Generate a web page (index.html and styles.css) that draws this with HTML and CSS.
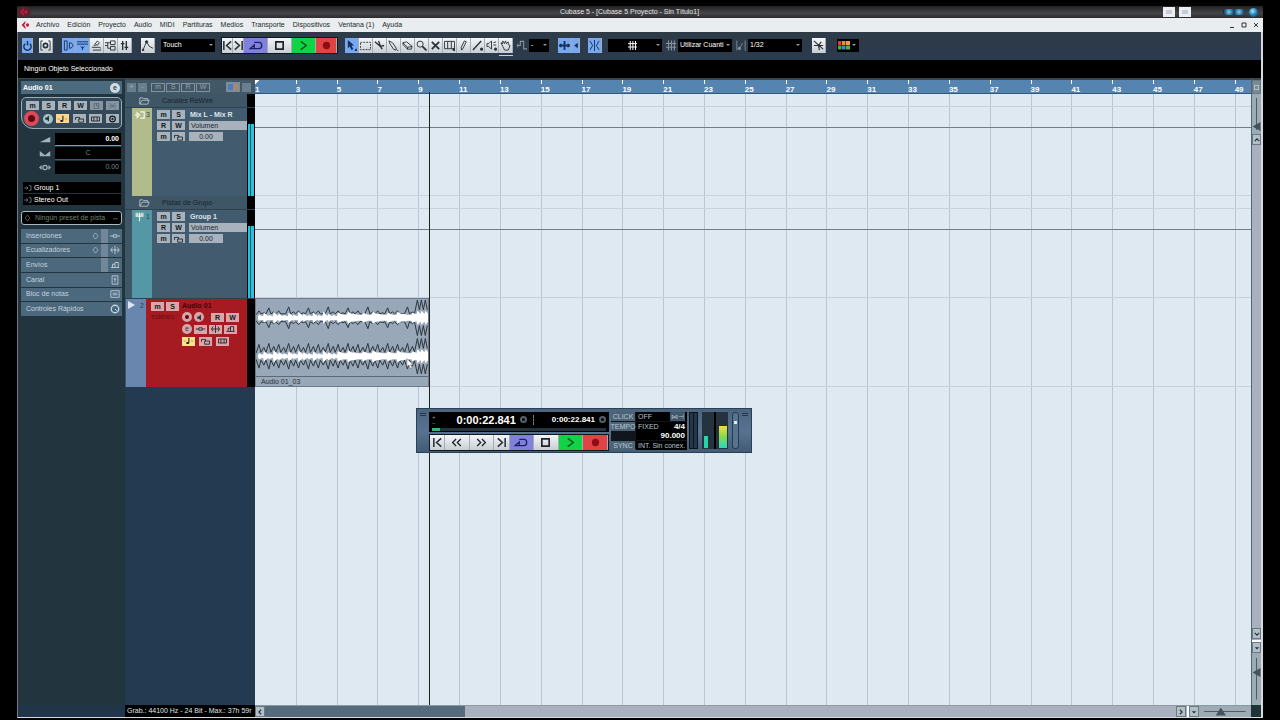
FILE: index.html
```html
<!DOCTYPE html>
<html lang="es">
<head>
  <meta charset="utf-8">
  <title>Cubase 5 - [Cubase 5 Proyecto - Sin Título1]</title>
  <link rel="stylesheet" href="styles.css">
</head>
<body>
  <!-- shared icons -->
  <svg class="defs" aria-hidden="true">
    <symbol id="i-logo" viewBox="0 0 12 12"><path d="M6 0 0 6l6 6V9L4 6l2-3z" fill="#c21b3c" stroke="none"/><circle cx="9" cy="6" r="2.500" fill="#c21b3c" stroke="none"/></symbol>
    <symbol id="i-power" viewBox="0 0 12 12"><path d="M3.500 4a4 4 0 1 0 5 0M6 1v5" stroke-width="1.500"/></symbol>
    <symbol id="i-camera" viewBox="0 0 12 12"><path d="M3 1H1v10h2M9 1h2v10H9"/><circle cx="6" cy="6" r="2.300" stroke-width="1.800"/></symbol>
    <symbol id="i-insp" viewBox="0 0 12 12"><path d="M1.500 1h3v10h-3zM7 3v6c5 0 5-6 0-6"/></symbol>
    <symbol id="i-info" viewBox="0 0 12 12"><path d="M0 2h12M0 4.500h12M4 7l2 2 2-2M6 7v4"/></symbol>
    <symbol id="i-over" viewBox="0 0 12 12"><path d="M2 11h9M1 8h8l2 1M3 6l4-1M4 5l3-4 2 2-2 3"/></symbol>
    <symbol id="i-pool" viewBox="0 0 12 12"><path d="M6 1h5v4H6zM6 7h5v4H6zM0 3h6M3 3v6h3M0 6h3"/></symbol>
    <symbol id="i-mixer" viewBox="0 0 12 12"><path d="M4 1v10M8 1v10M2 4h4M6 8h4" stroke-width="1.500"/></symbol>
    <symbol id="i-auto" viewBox="0 0 12 12"><path d="M1 11 5 2l3 5 4 2"/><circle cx="5" cy="2" r="1.300" fill="currentColor"/><circle cx="1" cy="11" r="1" fill="currentColor"/></symbol>
    <symbol id="i-start" viewBox="0 0 12 12"><path d="M2 1v10M10 1.500 5 6l5 4.500" stroke-width="1.700"/></symbol>
    <symbol id="i-end" viewBox="0 0 12 12"><path d="M10 1v10M2 1.500 7 6l-5 4.500" stroke-width="1.700"/></symbol>
    <symbol id="i-rew" viewBox="0 0 14 12"><path d="M6.500 1.500 2 6l4.500 4.500M12.500 1.500 8 6l4.500 4.500" stroke-width="1.600"/></symbol>
    <symbol id="i-fwd" viewBox="0 0 14 12"><path d="M1.500 1.500 6 6l-4.500 4.500M7.500 1.500 12 6l-4.500 4.500" stroke-width="1.600"/></symbol>
    <symbol id="i-loop" viewBox="0 0 16 12"><path d="M6 2.500h5.500c4 0 4 7 0 7H1.500L6 5.500v4" stroke-width="1.500"/></symbol>
    <symbol id="i-stop" viewBox="0 0 12 12"><path d="M2 2h8v8H2z" stroke-width="1.800"/></symbol>
    <symbol id="i-play" viewBox="0 0 12 12"><path d="M3 1.500 9 6l-6 4.500" stroke-width="1.700"/></symbol>
    <symbol id="i-rec" viewBox="0 0 12 12"><circle cx="6" cy="6" r="4" fill="#8e0d12" stroke="none"/></symbol>
    <symbol id="i-arrow" viewBox="0 0 12 12"><path d="M2 0v9l2-2 2 4 2-1-2-4h3z" fill="currentColor" stroke="none"/><circle cx="11" cy="11" r="1" fill="currentColor"/></symbol>
    <symbol id="i-range" viewBox="0 0 12 12"><path d="M.5 2.500h11v8H.5z" stroke-dasharray="2 1.200"/></symbol>
    <symbol id="i-split" viewBox="0 0 12 12"><path d="m1 2 6 5M5 1l2 6M7 7l4-1M7 7l2 3" stroke-width="1.500"/></symbol>
    <symbol id="i-glue" viewBox="0 0 12 12"><path d="m1 1 4 2 4 6-1 2-2-1-4-6zM9 10l2 2"/></symbol>
    <symbol id="i-erase" viewBox="0 0 12 12"><path d="m1 3 4-1 6 5-1 3H6L1 5zM1 3l5 5 5-1M6 8v2"/></symbol>
    <symbol id="i-zoom" viewBox="0 0 12 12"><circle cx="4.500" cy="4.500" r="3.300"/><path d="m7 7 4.500 4.500" stroke-width="1.800"/></symbol>
    <symbol id="i-mute" viewBox="0 0 12 12"><path d="m2 2 8 8M10 2l-8 8" stroke-width="1.900"/></symbol>
    <symbol id="i-warp" viewBox="0 0 12 12"><path d="M.5 1.500h11v8H.5zM4 1.500v8M8 1.500v8"/><circle cx="11" cy="10.500" r="1.300" fill="currentColor"/></symbol>
    <symbol id="i-pencil" viewBox="0 0 12 12"><path d="m4 11-.5-3L7 1l2 1-3.500 7z"/></symbol>
    <symbol id="i-line" viewBox="0 0 12 12"><path d="M1 11 10 1" stroke-width="1.500"/><circle cx="10.500" cy="10" r="1.300" fill="currentColor"/></symbol>
    <symbol id="i-play2" viewBox="0 0 12 12"><path d="M1 4h2l3-3v9L3 7H1zM8 3l3-1M8 5.500h3"/><circle cx="10.500" cy="10" r="1.300" fill="currentColor"/></symbol>
    <symbol id="i-hand" viewBox="0 0 12 12"><path d="M3 7 1 3l2 1V1l2 3 1-3 1 3 2-2v3l2 1-2 5H5z"/></symbol>
    <symbol id="i-step" viewBox="0 0 12 12"><path d="M0 6h4V1h4v9h4M1 4v4" stroke-width="1.300"/></symbol>
    <symbol id="i-scroll" viewBox="0 0 12 12"><path d="M6 1v10M0 6h12M2 4v4M10 4v4" stroke-width="2"/></symbol>
    <symbol id="i-left" viewBox="0 0 6 12"><path d="M5 3v6L1 6z" fill="currentColor" stroke="none"/></symbol>
    <symbol id="i-snap" viewBox="0 0 12 12"><path d="M6 0v12M1 1l3 5-3 5M11 1 8 6l3 5"/></symbol>
    <symbol id="i-grid" viewBox="0 0 12 12"><path d="M3 0v12M6.500 0v12M10 0v12M0 3.500h12M0 8h12" stroke-width="1.300"/></symbol>
    <symbol id="i-quant" viewBox="0 0 12 12"><path d="M1 0v12M11 0v12M4 10l4-7"/><circle cx="4" cy="9.500" r="1.500" fill="currentColor"/></symbol>
    <symbol id="i-cross" viewBox="0 0 12 12"><path d="m1 1 10 9M9 2 6 6H1M6 6h5M6 6l1 5" stroke-width="1.300"/></symbol>
    <symbol id="i-colors" viewBox="0 0 12 9"><g stroke="none"><path d="M0 0h3.500v4H0z" fill="#e23b2e"/><path d="M4 0h3.500v4H4z" fill="#f08a24"/><path d="M8 0h4v4H8z" fill="#e7a33b"/><path d="M0 4.500h3.500v4H0z" fill="#41b24a"/><path d="M4 4.500h3.500v4H4z" fill="#4a85d0"/><path d="M8 4.500h4v4H8z" fill="#5ab04b"/></g></symbol>
    <symbol id="i-note" viewBox="0 0 12 10"><path d="M6.500 1v6" stroke-width="1.300"/><ellipse cx="5" cy="7.500" rx="2" ry="1.400" fill="currentColor" stroke="none"/><path d="M0 5h3M9 5h3" opacity=".4"/></symbol>
    <symbol id="i-lock" viewBox="0 0 12 10"><path d="M5 5h6v4H5zM6 5V3H1v3"/></symbol>
    <symbol id="i-lanes" viewBox="0 0 12 10"><path d="M1 2.500h10v5H1zM4 2.500v5M8 2.500v5"/></symbol>
    <symbol id="i-gear" viewBox="0 0 12 10"><circle cx="6" cy="5" r="3.500" stroke-width="1.500"/><circle cx="6" cy="5" r="1" fill="currentColor"/></symbol>
    <symbol id="i-frz" viewBox="0 0 12 10"><path d="m2 1 8 8M10 1 2 9M1 5h10" opacity=".6"/></symbol>
    <symbol id="i-grp" viewBox="0 0 12 10"><path d="M3 2h6v6H3zM6 2v3h3" opacity=".7"/></symbol>
    <symbol id="i-spk" viewBox="0 0 12 12"><path d="M3 4.500h2L8 2v8L5 7.500H3z" fill="currentColor" stroke="none"/></symbol>
    <symbol id="i-ins" viewBox="0 0 12 10"><path d="M0 5h4M8 5h4M4 3.500h4v3H4z"/></symbol>
    <symbol id="i-eq" viewBox="0 0 12 10"><path d="M6 0v10M3 2 1 5l2 3M9 2l2 3-2 3M1 5h10"/></symbol>
    <symbol id="i-send" viewBox="0 0 12 10"><path d="M1 8h10M3 8V4h3M6 8V2h4v6"/></symbol>
    <symbol id="i-chan" viewBox="0 0 10 12"><path d="M1.500 1h7v10h-7zM5 3v6M3.500 5h3"/></symbol>
    <symbol id="i-pad" viewBox="0 0 12 10"><path d="M1 1h10v8H1zM3 4h6M3 6h6"/></symbol>
    <symbol id="i-knob" viewBox="0 0 12 12"><circle cx="6" cy="6" r="4.500" stroke-width="1.600"/><path d="m6 6 3 3"/></symbol>
    <symbol id="i-dia" viewBox="0 0 8 10"><path d="M4 1.500 7 5 4 8.500 1 5z" opacity=".7"/></symbol>
    <symbol id="i-folder" viewBox="0 0 14 10"><path d="M1 9V1h4l1 1h5v2M1 9l3-5h9l-2 5z"/></symbol>
    <symbol id="i-vol" viewBox="0 0 12 8"><path d="M0 7 12 1v6z" fill="currentColor" stroke="none"/></symbol>
    <symbol id="i-pan" viewBox="0 0 12 8"><path d="M0 1v6h12V1L6 6z" fill="currentColor" stroke="none"/></symbol>
    <symbol id="i-delay" viewBox="0 0 14 8"><circle cx="7" cy="4" r="2.500" stroke-width="1.500"/><path d="M3 1 0 4l3 3zM11 1l3 3-3 3z" fill="currentColor" stroke="none"/></symbol>
    <symbol id="i-in" viewBox="0 0 10 8"><path d="M0 4h5M3 2l2 2-2 2M6 1h3v6H6"/></symbol>
    <symbol id="i-ret" viewBox="0 0 14 12"><path d="M1 6h3M4 3l3 3-3 3zM8 2h5v8H8" stroke-width="1.500"/></symbol>
    <symbol id="i-fork" viewBox="0 0 10 12"><path d="M1 1v4h8V1M5 1v10M3 1v4M7 1v4" stroke-width="1.300"/></symbol>
    <symbol id="i-up" viewBox="0 0 8 8"><path d="m1 5.500 3-3 3 3" stroke-width="1.500"/></symbol>
    <symbol id="i-down" viewBox="0 0 8 8"><path d="m1 2.500 3 3 3-3" stroke-width="1.500"/></symbol>
    <symbol id="i-drop" viewBox="0 0 8 8"><path d="M1 3h6L4 6z" fill="currentColor" stroke="none"/></symbol>
    <symbol id="i-prev" viewBox="0 0 8 8"><path d="m5.500 1-3 3 3 3" stroke-width="1.500"/></symbol>
    <symbol id="i-next" viewBox="0 0 8 8"><path d="m2.500 1 3 3-3 3" stroke-width="1.500"/></symbol>
  </svg>

  <div class="app">
    <header class="titlebar">
      <span class="orb"><svg><use href="#i-logo"/></svg></span>
      <span class="title">Cubase 5 - [Cubase 5 Proyecto - Sin Título1]</span>
      <div class="win-tools">
        <i class="tag"></i><i class="tag"></i>
        <i class="pills"></i><i class="ball"></i>
      </div>
    </header>

    <nav class="menubar">
      <svg class="logo"><use href="#i-logo"/></svg>
      <a href="#">Archivo</a><a href="#">Edición</a><a href="#">Proyecto</a><a href="#">Audio</a><a href="#">MIDI</a><a href="#">Partituras</a><a href="#">Medios</a><a href="#">Transporte</a><a href="#">Dispositivos</a><a href="#">Ventana (1)</a><a href="#">Ayuda</a>
      <div class="mdi">
        <button aria-label="Minimizar"><svg viewBox="0 0 8 8"><path d="M2 6.500h4"/></svg></button>
        <button aria-label="Restaurar"><svg viewBox="0 0 8 8"><path d="M2 2h4v4H2z"/></svg></button>
        <button aria-label="Cerrar"><svg viewBox="0 0 8 8"><path d="m2 2 4 4M6 2 2 6"/></svg></button>
      </div>
    </nav>

    <div class="toolbar">
      <button class="tb on narrow" aria-label="Activar proyecto"><svg><use href="#i-power"/></svg></button>
      <button class="tb" aria-label="Vista"><svg><use href="#i-camera"/></svg></button>
      <div class="group">
        <button class="tb on" aria-label="Inspector"><svg><use href="#i-insp"/></svg></button>
        <button class="tb on" aria-label="Línea de información"><svg><use href="#i-info"/></svg></button>
        <button class="tb" aria-label="Vista general"><svg><use href="#i-over"/></svg></button>
        <button class="tb" aria-label="Pool"><svg><use href="#i-pool"/></svg></button>
        <button class="tb" aria-label="Mezclador"><svg><use href="#i-mixer"/></svg></button>
      </div>
      <button class="tb" aria-label="Automatización"><svg><use href="#i-auto"/></svg></button>
      <span class="combo wide"><select aria-label="Modo de automatización"><option>Touch</option></select></span>
      <div class="group trans">
        <button class="tb narrow" aria-label="Inicio"><svg><use href="#i-start"/></svg></button>
        <button class="tb narrow" aria-label="Final"><svg><use href="#i-end"/></svg></button>
        <button class="tb key loop" aria-label="Ciclo"><svg><use href="#i-loop"/></svg></button>
        <button class="tb key" aria-label="Parar"><svg><use href="#i-stop"/></svg></button>
        <button class="tb key play" aria-label="Reproducir"><svg><use href="#i-play"/></svg></button>
        <button class="tb key rec" aria-label="Grabar"><svg><use href="#i-rec"/></svg></button>
      </div>
      <div class="group tools">
        <button class="tb on" aria-label="Seleccionar"><svg><use href="#i-arrow"/></svg></button>
        <button class="tb" aria-label="Rango"><svg><use href="#i-range"/></svg></button>
        <button class="tb" aria-label="Dividir"><svg><use href="#i-split"/></svg></button>
        <button class="tb" aria-label="Pegar"><svg><use href="#i-glue"/></svg></button>
        <button class="tb" aria-label="Borrar"><svg><use href="#i-erase"/></svg></button>
        <button class="tb" aria-label="Zoom"><svg><use href="#i-zoom"/></svg></button>
        <button class="tb" aria-label="Enmudecer"><svg><use href="#i-mute"/></svg></button>
        <button class="tb" aria-label="Warp"><svg><use href="#i-warp"/></svg></button>
        <button class="tb" aria-label="Dibujar"><svg><use href="#i-pencil"/></svg></button>
        <button class="tb" aria-label="Línea"><svg><use href="#i-line"/></svg></button>
        <button class="tb" aria-label="Escuchar"><svg><use href="#i-play2"/></svg></button>
        <button class="tb picked" aria-label="Mano"><svg><use href="#i-hand"/></svg></button>
      </div>
      <svg class="hint"><use href="#i-step"/></svg>
      <span class="combo tiny"><select aria-label="Color"><option>-</option></select></span>
      <div class="group follow">
        <button class="tb on" aria-label="Autodesplazamiento"><svg><use href="#i-scroll"/></svg></button>
        <button class="tb on thin" aria-label="Suspender"><svg><use href="#i-left"/></svg></button>
      </div>
      <button class="tb on" aria-label="Ajustar"><svg><use href="#i-snap"/></svg></button>
      <button class="combo wide center" aria-label="Rejilla"><svg><use href="#i-grid"/></svg></button>
      <svg class="hint"><use href="#i-grid"/></svg>
      <span class="combo wide"><select aria-label="Tipo de rejilla"><option>Utilizar Cuanti</option></select></span>
      <svg class="hint"><use href="#i-quant"/></svg>
      <span class="combo wide"><select aria-label="Cuantización"><option>1/32</option></select></span>
      <button class="tb cross" aria-label="Cruce por cero"><svg><use href="#i-cross"/></svg></button>
      <button class="combo small" aria-label="Colores"><svg><use href="#i-colors"/></svg></button>
    </div>

    <div class="infoline">Ningún Objeto Seleccionado</div>

    <main class="workspace">
      <aside class="inspector">
        <h2>Audio 01 <button class="edit" aria-label="Editar canal">e</button></h2>
        <div class="channel">
          <div class="btn-row">
            <button class="mini">m</button><button class="mini">S</button>
            <button class="mini">R</button><button class="mini">W</button>
            <button class="mini dim" aria-label="Grupo"><svg><use href="#i-grp"/></svg></button>
            <button class="mini dim" aria-label="Congelar"><svg><use href="#i-frz"/></svg></button>
          </div>
          <div class="btn-row">
            <button class="round big-rec" aria-label="Grabar"></button>
            <button class="round mon" aria-label="Monitor"><svg><use href="#i-spk"/></svg></button>
            <button class="mini amber" aria-label="Base musical"><svg><use href="#i-note"/></svg></button>
            <button class="mini" aria-label="Bloquear"><svg><use href="#i-lock"/></svg></button>
            <button class="mini" aria-label="Carriles"><svg><use href="#i-lanes"/></svg></button>
            <button class="mini" aria-label="Ajustes"><svg><use href="#i-gear"/></svg></button>
          </div>
        </div>
        <div class="params">
          <svg><use href="#i-vol"/></svg><output class="lit">0.00</output>
          <svg><use href="#i-pan"/></svg><output class="mid">C</output>
          <svg><use href="#i-delay"/></svg><output>0.00</output>
        </div>
        <div class="routing">
          <button><svg><use href="#i-in"/></svg>Group 1</button>
          <button><svg><use href="#i-in"/></svg>Stereo Out</button>
        </div>
        <button class="preset"><svg><use href="#i-dia"/></svg><span>Ningún preset de pista</span><b>↔</b></button>
        <div class="sections">
          <button class="fx">Inserciones<svg class="dia"><use href="#i-dia"/></svg><svg><use href="#i-ins"/></svg></button>
          <button class="fx">Ecualizadores<svg class="dia"><use href="#i-dia"/></svg><svg><use href="#i-eq"/></svg></button>
          <button class="fx">Envíos<svg><use href="#i-send"/></svg></button>
          <button>Canal<svg><use href="#i-chan"/></svg></button>
          <button>Bloc de notas<svg><use href="#i-pad"/></svg></button>
          <button>Controles Rápidos<svg><use href="#i-knob"/></svg></button>
        </div>
      </aside>

      <section class="tracklist">
        <div class="list-head">
          <button class="sq">+</button><button class="sq">-</button>
          <div class="filters"><button>m</button><button>S</button><button>R</button><button>W</button></div>
          <button class="split" aria-label="Dividir lista"><i></i><i></i></button><button class="sq" aria-label="Opciones"></button>
        </div>

        <div class="folder"><svg><use href="#i-folder"/></svg>Canales ReWire</div>
        <div class="track">
          <div class="strip sand"><svg><use href="#i-ret"/></svg>3</div>
          <div class="controls">
            <button class="mini">m</button><button class="mini">S</button><strong>Mix L - Mix R</strong>
            <button class="mini">R</button><button class="mini">W</button><span class="field">Volumen</span>
            <button class="mini">m</button><button class="mini" aria-label="Bloquear"><svg><use href="#i-lock"/></svg></button><span class="field value">0.00</span>
          </div>
          <div class="meter"><i></i></div>
        </div>

        <div class="folder"><svg><use href="#i-folder"/></svg>Pistas de Grupo</div>
        <div class="track">
          <div class="strip teal"><svg><use href="#i-fork"/></svg>1</div>
          <div class="controls">
            <button class="mini">m</button><button class="mini">S</button><strong>Group 1</strong>
            <button class="mini">R</button><button class="mini">W</button><span class="field">Volumen</span>
            <button class="mini">m</button><button class="mini" aria-label="Bloquear"><svg><use href="#i-lock"/></svg></button><span class="field value">0.00</span>
          </div>
          <div class="meter"><i></i></div>
        </div>

        <div class="track audio">
          <div class="strip blue"><i class="tri"></i>2</div>
          <div class="red-box">
            <div class="side">
              <div class="line"><button class="mini">m</button><button class="mini">S</button></div>
              <small>estéreo</small>
            </div>
            <div class="main">
              <strong>Audio 01</strong>
              <div class="line">
                <button class="round dot" aria-label="Grabar"></button>
                <button class="round" aria-label="Monitor"><svg><use href="#i-spk"/></svg></button>
                <button class="mini gap">R</button><button class="mini">W</button>
              </div>
              <div class="line">
                <button class="round">e</button>
                <button class="mini" aria-label="Inserciones"><svg><use href="#i-ins"/></svg></button>
                <button class="mini" aria-label="Ecualizador"><svg><use href="#i-eq"/></svg></button>
                <button class="mini" aria-label="Envíos"><svg><use href="#i-send"/></svg></button>
              </div>
              <div class="line spaced">
                <button class="mini amber" aria-label="Base musical"><svg><use href="#i-note"/></svg></button>
                <button class="mini" aria-label="Bloquear"><svg><use href="#i-lock"/></svg></button>
                <button class="mini" aria-label="Carriles"><svg><use href="#i-lanes"/></svg></button>
              </div>
            </div>
          </div>
          <div class="meter"></div>
        </div>
      </section>

      <section class="arrange">
        <div class="ruler bars" id="ruler"></div>
        <div class="canvas">
          <div class="bars gridlines" id="gridlines"></div>
          <div class="lane head"></div>
          <div class="lane auto"></div>
          <div class="lane head"></div>
          <div class="lane auto"></div>
          <div class="lane">
            <div class="clip">
              <svg id="wave" viewBox="0 0 174 78" preserveAspectRatio="none"></svg>
              <span>Audio 01_03</span>
            </div>
          </div>
        </div>
        <div class="playhead"></div>
        <svg class="pointer" viewBox="0 0 10 12"><path d="M1 0v9l2-2 2 4 2-1-2-3h3z" fill="#fff" stroke="#555" stroke-width=".5"/></svg>
      </section>

      <div class="vscroll">
        <button class="cap" aria-label="Dividir"><i></i></button>
        <input type="range" class="vrange top" aria-label="Zoom de onda" value="10">
        <button aria-label="Subir"><svg><use href="#i-up"/></svg></button>
        <div class="track-space"></div>
        <button aria-label="Bajar"><svg><use href="#i-down"/></svg></button>
        <button class="split-btn" aria-label="Menú de zoom"><svg><use href="#i-drop"/></svg></button>
        <input type="range" class="vrange" aria-label="Zoom vertical" value="65">
      </div>

      <div class="foot-left"></div>
      <div class="status">Grab.: 44100 Hz - 24 Bit - Max.: 37h 59r</div>
      <div class="hscroll">
        <button aria-label="Izquierda"><svg><use href="#i-prev"/></svg></button>
        <div class="track-space"><i></i></div>
        <button aria-label="Derecha"><svg><use href="#i-next"/></svg></button>
        <button class="split-btn" aria-label="Menú de zoom"><svg><use href="#i-drop"/></svg></button>
        <input type="range" class="hrange" aria-label="Zoom horizontal" value="40">
      </div>
      <div class="corner"></div>

      <!-- floating transport panel -->
      <div class="transport">
        <div class="grip"><i></i></div>
        <div class="deck">
          <div class="times">
            <span class="pm">+<br>−</span>
            <output class="big">0:00:22.841</output><i class="clock"></i>
            <span class="bar"></span>
            <output class="small">0:00:22.841</output><i class="clock"></i>
            <div class="progress"></div>
          </div>
          <div class="keys">
            <button class="tb narrow" aria-label="Inicio"><svg><use href="#i-start"/></svg></button>
            <button class="tb key" aria-label="Rebobinar"><svg><use href="#i-rew"/></svg></button>
            <button class="tb key" aria-label="Avanzar"><svg><use href="#i-fwd"/></svg></button>
            <button class="tb narrow" aria-label="Final"><svg><use href="#i-end"/></svg></button>
            <button class="tb key loop" aria-label="Ciclo"><svg><use href="#i-loop"/></svg></button>
            <button class="tb key" aria-label="Parar"><svg><use href="#i-stop"/></svg></button>
            <button class="tb key play" aria-label="Reproducir"><svg><use href="#i-play"/></svg></button>
            <button class="tb key rec" aria-label="Grabar"><svg><use href="#i-rec"/></svg></button>
          </div>
        </div>
        <div class="tempo">
          <button>CLICK</button><div class="cell"><span>OFF</span><em>⋈⊣</em></div>
          <button>TEMPO</button><div class="cell tall"><span>FIXED</span><b>4/4</b><b class="bpm">90.000</b></div>
          <button>SYNC</button><div class="cell"><span>INT. Sin conex.</span></div>
        </div>
        <div class="vu idle"><i></i><i></i></div>
        <div class="vu live"><i class="low"></i><i class="high"></i></div>
        <div class="vol"><i></i></div>
        <div class="grip end"><i></i></div>
      </div>
    </main>
  </div>

  <script>
    const ruler = document.getElementById('ruler');
    const gridlines = document.getElementById('gridlines');

    // one cell every two bars
    for (let bar = 1; bar <= 49; bar += 2) {
      const mark = document.createElement('span');
      mark.innerText = bar;
      ruler.appendChild(mark);
      gridlines.appendChild(document.createElement('i'));
    }

    // dark zigzag of the peaks with the white body over it
    function dibujarCanal(centro, picos) {
      let arriba = '';
      let abajo = '';
      let blanco = '';
      for (let x = 3, n = 0; x < 173; n++) {
        const fin = x > 160;
        const alto = fin ? 18 : picos[n % picos.length];
        const cuerpo = fin ? 7 : [3, 5, 3, 6, 4][n % 5];
        const base = x > 78 ? 3 : 1;
        const paso = fin ? 4 : 5;
        const valle = fin ? 8 : 4;
        arriba += `L${x} ${centro - alto} L${x + 2} ${centro - valle}`;
        abajo += `L${x} ${centro + alto} L${x + 2} ${centro + valle}`;
        blanco += `M${x - 1} ${centro - base} L${x} ${centro - cuerpo} L${x + paso} ${centro - base} V${centro + base} L${x} ${centro + cuerpo} L${x - 1} ${centro + base} z`;
        x += paso;
      }
      return `<path class="peaks" d="M0 ${centro - 3}${arriba}"/>` +
        `<path class="peaks" d="M0 ${centro + 3}${abajo}"/>` +
        `<path class="body" d="${blanco}"/>`;
    }

    document.getElementById('wave').innerHTML =
      dibujarCanal(19, [7, 5, 10, 6, 7, 4, 11, 6]) + dibujarCanal(58, [12, 9, 13, 10]);
  </script>
</body>
</html>
```
FILE: styles.css
```css
* {
  box-sizing: border-box;
}

body {
  margin: 0;
  background: #000;
  font-family: "Liberation Sans", Arial, sans-serif;
  font-size: 7px;
  line-height: 10px;
  color: #fff;
}

button, select, input {
  margin: 0;
  padding: 0;
  border: 0;
  border-radius: 0;
  font: inherit;
  color: inherit;
  background: none;
  appearance: none;
}

button {
  display: flex;
  align-items: center;
  justify-content: center;
}

svg {
  fill: none;
  stroke: currentColor;
  display: block;
  flex: none;
}

.defs {
  position: absolute;
  width: 0;
  height: 0;
}

.app {
  display: flex;
  flex-direction: column;
  height: 100vh;
  padding: 6px 17px 2px;
}

/* title and menu */
.titlebar {
  display: flex;
  align-items: center;
  height: 12px;
  background: linear-gradient(#222225, #454549 60%, #2b2b2e);
}

.orb {
  flex: 1;
}

.orb svg {
  width: 14px;
  height: 10px;
  padding: 1px;
  background: #54232c;
  border-radius: 5px;
}

.title {
  margin-right: 16px;
  color: #e4e4e4;
}

.win-tools {
  flex: 1;
  display: flex;
  align-items: center;
  justify-content: flex-end;
  gap: 4px;
  padding-right: 5px;
}

.tag {
  width: 12px;
  height: 10px;
  background: #c9cad8;
  border: 3px solid #ececf3;
}

.pills {
  width: 22px;
  height: 6px;
  margin-left: 28px;
  border-radius: 3px;
  background: radial-gradient(circle at 27% 50%, #7cd0f4, #17476b 30%, transparent 35%), radial-gradient(circle at 73% 50%, #7cd0f4, #17476b 30%, #10222e 60%);
}

.ball {
  width: 9px;
  height: 9px;
  border-radius: 50%;
  background: radial-gradient(circle at 40% 35%, #a3e4fb, #1b7fb5 50%, #0c3552);
}

.menubar {
  display: flex;
  align-items: center;
  gap: 8px;
  height: 14px;
  padding-left: 4px;
  background: #e9edef;
}

.menubar a {
  color: #24282b;
  text-decoration: none;
}

.menubar .logo {
  width: 9px;
  height: 8px;
  margin-right: -2px;
}

.mdi {
  display: flex;
  gap: 4px;
  margin-left: auto;
  padding-right: 3px;
  color: #333;
}

.mdi svg {
  width: 8px;
  height: 8px;
}

/* toolbar */
.toolbar {
  display: flex;
  align-items: center;
  height: 28px;
  gap: 6px;
  padding: 0 4px 2px;
  border-left: 1px solid #6c7a85;
  border-right: 2px solid #d5dade;
  background: linear-gradient(#2e3b47, #2b3a4f);
}

.group {
  display: flex;
  margin-right: 3px;
}

.tb {
  width: 14px;
  height: 15px;
  color: #26323a;
  background: linear-gradient(#f4f6f8, #c8ced3);
  border-right: 1px solid #a4adb4;
}

.tb svg {
  width: 11px;
  height: 11px;
}

.tb.on {
  color: #14305c;
  background: #78a9f0;
}

.tb.narrow, .tb.thin {
  width: 11px;
}

.tb.thin {
  width: 8px;
}

.tb.thin svg {
  width: 6px;
}

.tb.key {
  width: 24px;
  color: #1c2228;
}

.tb.loop {
  color: #202068;
  background: #8080dd;
}

.tb.loop svg {
  width: 14px;
}

.tb.play {
  color: #06591a;
  background: #10d446;
}

.tb.rec {
  width: 21px;
  background: #df4343;
}

.tb.picked {
  box-shadow: 0 2px #2d3e54, 0 3px #cbd3d8;
}

.group:nth-of-type(1) {
  margin-left: 3px;
}

.trans {
  margin: 0 1px 0 0;
  padding: 1px;
  background: #11161b;
}

.tools {
  margin-right: 0;
}

.follow {
  margin: 0 2px 0 3px;
}

.combo {
  display: flex;
  align-items: center;
  height: 13px;
  background: #000;
}

.combo::after {
  content: "";
  margin-right: 2px;
  border: 2px solid transparent;
  border-top-color: #9a9a9a;
  border-bottom: 0;
}

.combo select {
  flex: 1;
  min-width: 0;
  padding-left: 2px;
}

.combo.wide {
  width: 54px;
}

.combo.tiny {
  width: 20px;
}

.combo.small {
  width: 22px;
  margin-left: 5px;
  justify-content: space-evenly;
}

.combo.center svg {
  width: 11px;
  height: 9px;
  margin: auto;
}

.combo.small svg {
  width: 12px;
  height: 9px;
}

.hint {
  width: 10px;
  height: 11px;
  margin: 0 -4px 0 -2px;
  color: #8794a0;
}

.cross {
  margin-left: 4px;
}

.infoline {
  height: 18px;
  padding: 4px 6px;
  border-left: 1px solid #6c7a85;
  border-right: 2px solid #d5dade;
  background: #000;
}

/* main area */
.workspace {
  position: relative;
  flex: 1;
  min-height: 0;
  display: grid;
  grid-template-columns: 107px 130px 1fr 10px;
  grid-template-rows: 1fr 12px;
  border: solid #d5dade;
  border-width: 0 2px 1px 1px;
  border-left-color: #6c7a85;
  background: #22353f;
}

.inspector {
  display: flex;
  flex-direction: column;
  padding: 2px 3px 0;
  border-top: 1px solid #3e464c;
  background: #22353f;
}

.inspector h2 {
  display: flex;
  align-items: center;
  justify-content: space-between;
  height: 13px;
  margin: 0 0 3px;
  padding: 0 2px;
  font-size: 7px;
  background: #4c6a7e;
}

.edit {
  width: 10px;
  height: 10px;
  border-radius: 50%;
  color: #2f4557;
  background: #d2dbe1;
  font-weight: bold;
}

.channel {
  height: 32px;
  padding: 1px 2px 2px;
  border: 1px solid #98acba;
  border-radius: 5px 5px 5px 12px;
  background: #33495a;
}

.btn-row {
  display: flex;
  justify-content: space-between;
  align-items: center;
  height: 13px;
}

.channel .btn-row:first-child {
  padding-left: 2px;
}

.mini {
  width: 13px;
  height: 9px;
  color: #101820;
  background: #a7b2ba;
  font-weight: bold;
  line-height: 9px;
}

.mini svg {
  width: 11px;
  height: 8px;
}

.mini.dim {
  color: #3e5262;
  background: #8695a0;
}

.mini.amber {
  background: #ffd68a;
}

.round {
  width: 10px;
  height: 10px;
  border-radius: 50%;
  color: #1d3a42;
  background: #a9c3c4;
}

.round svg {
  width: 9px;
  height: 9px;
}

.big-rec {
  width: 15px;
  height: 15px;
  border: 4px solid #d94b58;
  background: #5f0812;
}

.params {
  display: grid;
  grid-template-columns: 31px 1fr;
  row-gap: 1px;
  margin: 4px 0 8px;
  align-items: center;
}

.params svg {
  width: 12px;
  height: 7px;
  justify-self: end;
  margin-right: 1px;
  color: #a3b2bc;
}

.params output {
  height: 13px;
  margin: 0 1px 0 3px;
  padding: 1px 2px;
  text-align: right;
  color: #77828a;
  background: #000;
}

.params .lit {
  color: #fff;
  font-weight: bold;
  border-bottom: 1px solid #67a7ba;
}

.params .mid {
  text-align: center;
  border-bottom: 1px solid #2e6172;
}

.routing {
  display: flex;
  flex-direction: column;
  gap: 1px;
  margin: 0 1px 6px 2px;
}

.routing button {
  justify-content: flex-start;
  gap: 2px;
  height: 11px;
  padding-left: 1px;
  background: #000;
}

.routing svg {
  width: 8px;
  height: 6px;
  color: #7e8d98;
}

.preset {
  height: 14px;
  margin-bottom: 4px;
  padding: 0 2px;
  gap: 4px;
  border: 1px solid #a9bac6;
  border-radius: 3px;
  background: #000;
  color: #8a9a98;
}

.preset span {
  flex: 1;
  text-align: left;
  white-space: nowrap;
  color: #6f8268;
}

.preset svg {
  width: 7px;
  height: 8px;
}

.sections {
  display: grid;
  grid-template-rows: repeat(6, 1fr);
  row-gap: 1px;
  height: 87px;
}

.sections button {
  padding: 0 2px 0 5px;
  color: #c5d3dc;
  background: #4c687d;
}

.sections svg {
  width: 10px;
  height: 10px;
  margin-left: auto;
}

.sections .fx {
  background: linear-gradient(90deg, #4c687d 80px, #71879a 80px, #71879a 87px, #4c687d 87px);
}

.sections .dia {
  width: 7px;
}

.sections .dia + svg {
  margin-left: 11px;
}

/* track list */
.tracklist {
  border-top: 2px solid #3e464c;
  background: #243a50;
}

.list-head {
  display: flex;
  align-items: center;
  gap: 2px;
  height: 14px;
  padding: 0 4px 0 2px;
  background: #435866;
  color: #9eafba;
}

.sq {
  width: 9px;
  height: 9px;
  background: #687f8f;
}

.filters {
  display: flex;
  gap: 1px;
  margin: 0 auto 0 2px;
}

.filters button {
  width: 14px;
  height: 9px;
  border: 1px solid #8293a0;
  color: #92a4b1;
}

.split {
  padding: 2px;
  background: #7d8e9a;
}

.split i {
  width: 5px;
  height: 6px;
  background: #4a7dc0;
}

.split i + i {
  background: #a58a70;
}

.folder {
  display: flex;
  align-items: center;
  gap: 12px;
  height: 13px;
  padding-left: 14px;
  border-right: 8px solid #000;
  background: #3f5667;
  color: #16232e;
}

.folder svg {
  width: 11px;
  height: 8px;
  color: #c3d0d8;
}

.track {
  display: flex;
  height: 89px;
  padding-left: 7px;
  background: #3f5667;
  border-top: 1px solid #2e414f;
}

.strip {
  display: flex;
  justify-content: space-between;
  width: 20px;
  padding: 2px;
  color: #33434c;
}

.strip svg {
  width: 11px;
  height: 10px;
  color: #f4f6e6;
}

.sand {
  background: #b2bb8c;
}

.teal {
  background: #5598a5;
}

.blue {
  background: #6986ae;
}

.tri {
  height: 8px;
  border: solid transparent;
  border-width: 4px 0 4px 7px;
  border-left-color: #dde8f4;
}

.controls {
  flex: 1;
  display: grid;
  grid-template-columns: 13px 13px 1fr;
  grid-auto-rows: 9px;
  gap: 2px;
  padding: 2px 0 0 5px;
  background: #435b6f;
}

.controls strong {
  padding-left: 3px;
  color: #dbe6ee;
  white-space: nowrap;
}

.field {
  margin-left: 2px;
  padding-left: 2px;
  line-height: 9px;
  color: #1d2730;
  background: #a8b2bc;
}

.value {
  width: 34px;
  padding: 0;
  text-align: center;
}

.meter {
  display: flex;
  align-items: flex-end;
  width: 8px;
  padding-left: 1px;
  background: #000;
}

.meter i {
  width: 6px;
  height: 72px;
  background: linear-gradient(90deg, #25c4dc 2px, #0e5a6e 2px, #0e5a6e 3px, #25c4dc 3px);
}

.audio {
  padding-left: 1px;
}

.red-box {
  flex: 1;
  display: flex;
  gap: 3px;
  padding: 2px 0 0 5px;
  background: #a61b22;
}

.line {
  display: flex;
  align-items: center;
  gap: 2px;
  height: 12px;
}

.side .line {
  height: 10px;
}

.side small {
  display: block;
  margin-top: 1px;
  font-size: 7px;
  color: #6a0e12;
}

.main strong {
  display: block;
  color: #3f0508;
}

.main .gap {
  margin-left: 5px;
}

.main .spaced {
  gap: 4px;
}

.red-box .mini, .red-box .round {
  background-color: #d9a5a8;
}

.red-box .mini.amber {
  background-color: #ffe08c;
}

.red-box .dot {
  border: 3px solid #d9a5a8;
  background-color: #5b0509;
}

/* arrangement */
.arrange {
  position: relative;
  display: flex;
  flex-direction: column;
  overflow: hidden;
  border-top: 2px solid #3e464c;
  background: #dee9f2;
}

/* 24 two-bar cells, the last one is cut by the edge */
.bars {
  display: grid;
  grid-template-columns: repeat(24, 100fr) 40fr;
}

.ruler {
  height: 14px;
  background: #5584b0;
  border-bottom: 1px solid #35597c;
  font-size: 8px;
  font-weight: bold;
}

.ruler span {
  min-width: 0;
  padding-top: 5px;
  background: linear-gradient(#fff, #fff) 0 0 / 1px 4px no-repeat;
}

.ruler span:first-child {
  background: linear-gradient(135deg, #fff 3px, transparent 3px);
}

.canvas {
  position: relative;
  flex: 1;
}

.gridlines {
  position: absolute;
  inset: 0;
}

.gridlines i {
  border-left: 1px solid #b9c6d0;
}

.gridlines i:first-child {
  border-color: transparent;
}

.lane {
  position: relative;
  height: 89px;
  border-bottom: 1px solid #c6d3dc;
}

.lane.head {
  height: 13px;
}

.auto::before {
  content: "";
  display: block;
  height: 20px;
  border-bottom: 1px solid #6f7e88;
}

.clip {
  display: flex;
  flex-direction: column;
  width: 17.5%;
  height: 89px;
  border: 1px solid #6d7b88;
  background: #98a8b8;
}

.clip svg {
  width: 100%;
  flex: 1;
  min-height: 0;
}

.clip span {
  height: 10px;
  padding-left: 5px;
  border-top: 1px solid #5d6a76;
  line-height: 9px;
  color: #29323a;
}

.peaks {
  stroke: #2c343b;
}

.body {
  fill: #fff;
  stroke: none;
}

.playhead {
  position: absolute;
  top: 12px;
  bottom: 0;
  left: 17.5%;
  width: 1px;
  background: #222;
}

.pointer {
  position: absolute;
  top: 278px;
  left: 15.2%;
  width: 9px;
  height: 12px;
}

/* scroll bars */
.vscroll, .hscroll {
  display: flex;
  background: #a5afbb;
}

.vscroll {
  flex-direction: column;
  border-top: 2px solid #3e464c;
  border-left: 1px solid #55646e;
}

.vscroll button, .hscroll button {
  width: 10px;
  height: 11px;
  color: #26323a;
  background: #b3bfc7;
  border: 1px solid #697983;
}

.vscroll svg, .hscroll svg {
  width: 6px;
  height: 6px;
}

.vscroll button {
  width: 100%;
}

.vscroll .cap {
  height: 14px;
  background: #7b8b96;
}

.cap i {
  width: 5px;
  height: 5px;
  border: 1px solid #b4c0c8;
}

.track-space {
  flex: 1;
  background: #a9b1c0;
}

.hscroll .track-space i {
  display: block;
  width: 22%;
  height: 100%;
  background: #566b7b;
}

.vscroll .split-btn {
  margin-top: 3px;
  box-shadow: 0 -2px #fff;
}

.hscroll .split-btn {
  margin-left: 3px;
  box-shadow: -2px 0 #fff;
}

.hscroll {
  border-top: 1px solid #8d9aa4;
}

.vrange {
  writing-mode: vertical-lr;
  direction: rtl;
  width: 9px;
  height: 52px;
  background: linear-gradient(#4e5c66, #4e5c66) center / 1px 80% no-repeat #9dabb4;
}

.vrange.top {
  height: 40px;
}

.hrange {
  width: 52px;
  height: 11px;
  background: linear-gradient(#4e5c66, #4e5c66) center / 80% 1px no-repeat #9dabb4;
}

.vrange::-webkit-slider-thumb {
  appearance: none;
  width: 8px;
  height: 9px;
  background: #43525c;
  clip-path: polygon(0 50%, 100% 0, 100% 100%);
}

.hrange::-webkit-slider-thumb {
  appearance: none;
  width: 10px;
  height: 8px;
  background: #43525c;
  clip-path: polygon(50% 0, 100% 100%, 0 100%);
}

.foot-left {
  background: #20344a;
}

.status {
  padding: 1px 0 0 2px;
  overflow: hidden;
  white-space: nowrap;
  background: #000;
  color: #dfe4e7;
}

.corner {
  background: #1e3439;
}

/* transport panel */
.transport {
  position: absolute;
  top: 330px;
  left: 398px;
  display: flex;
  gap: 2px;
  height: 45px;
  padding: 3px 2px;
  border: 1px solid #2c4054;
  background: linear-gradient(#4a6480, #587391 50%, #425b76);
}

.grip {
  width: 8px;
  padding: 1px;
}

.grip i {
  display: block;
  height: 3px;
  border: solid #22384e;
  border-width: 1px 0;
}

.deck {
  width: 180px;
}

.times {
  display: flex;
  flex-wrap: wrap;
  align-items: center;
  height: 20px;
  padding: 0 3px;
  background: #000;
}

.pm {
  margin-right: 21px;
  font-size: 6px;
  line-height: 6px;
  color: #8a969e;
}

.times .big {
  font-size: 11px;
  font-weight: bold;
  line-height: 14px;
}

.times .small {
  margin-left: auto;
  font-size: 8px;
  font-weight: bold;
}

.clock {
  width: 7px;
  height: 7px;
  margin-left: 4px;
  border: 2px solid #56626b;
  border-radius: 50%;
}

.bar {
  height: 10px;
  margin-left: 6px;
  border-left: 1px dashed #77828a;
}

.progress {
  width: 100%;
  height: 3px;
  background: linear-gradient(90deg, #37b57a 8px, #26323d 8px);
}

.keys {
  display: flex;
  margin-top: 2px;
  padding: 1px;
  background: #11161b;
}

.keys .tb {
  flex: 25;
}

.keys .narrow {
  flex: 15;
}

.tempo {
  display: grid;
  grid-template-columns: 24px 51px;
  grid-template-rows: 9px 18px 9px;
  gap: 1px;
  line-height: 9px;
  color: #b6c0c8;
  background: #10161c;
}

.tempo button {
  height: 9px;
  color: #b8c8d4;
  background: #4c6375;
}

.cell {
  display: flex;
  flex-wrap: wrap;
  justify-content: space-between;
  overflow: hidden;
  padding: 0 2px;
  white-space: nowrap;
  background: #000;
}

.cell em {
  padding: 0 1px;
  font-style: normal;
  background: #40566a;
}

.cell b {
  font-size: 8px;
  color: #fff;
}

.bpm {
  width: 100%;
  text-align: right;
}

.vu {
  display: flex;
  align-items: flex-end;
  gap: 1px;
  padding: 1px;
  background: #0c131a;
}

.idle i {
  width: 3px;
  height: 100%;
  background: #24384a;
}

.live {
  width: 26px;
  margin-left: 2px;
  justify-content: space-between;
  background: linear-gradient(90deg, #25333f 46%, #000 46%, #000 54%, #25333f 54%);
}

.low {
  width: 4px;
  height: 12px;
  margin-left: 1px;
  background: #27d5a8;
}

.high {
  width: 8px;
  height: 22px;
  background: linear-gradient(#f3e02e, #7edc50 50%, #2bd6c5);
}

.vol {
  width: 7px;
  margin-left: 2px;
  padding: 8px 1px;
  border: 1px solid #253b50;
  border-radius: 3px;
  background: #58738f;
}

.vol i {
  display: block;
  height: 3px;
  background: #e2ebf2;
}
```
